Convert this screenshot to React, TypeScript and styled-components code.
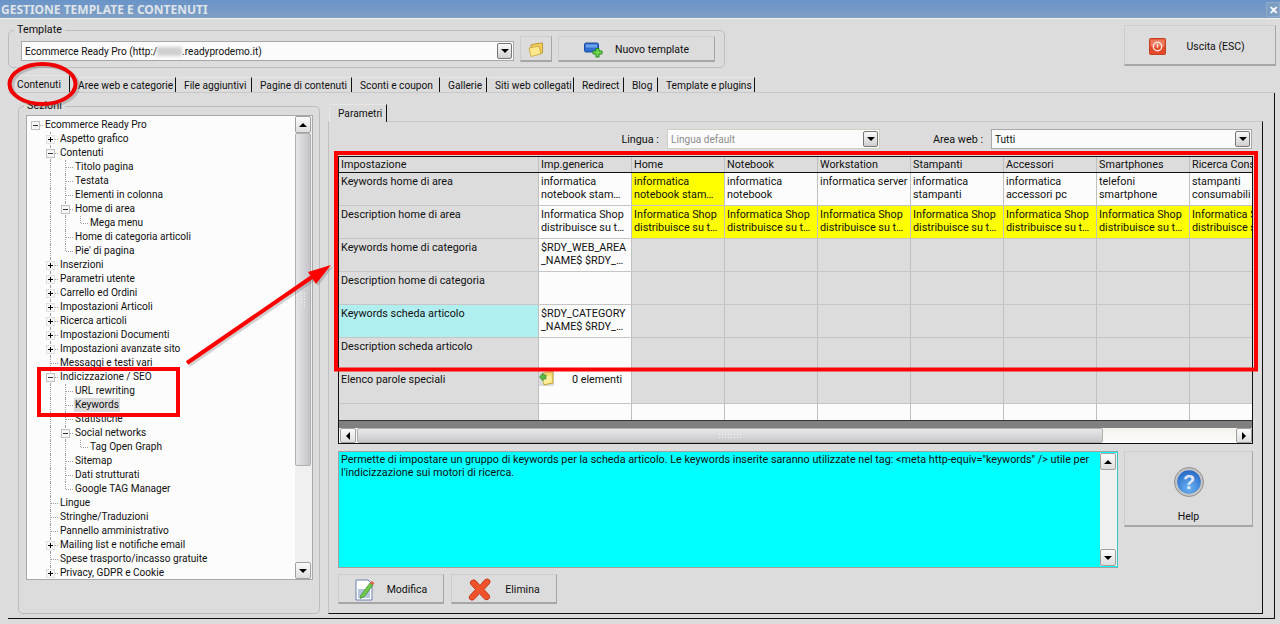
import React, { ReactElement } from 'react';
import styled, { createGlobalStyle, css } from 'styled-components';

const GlobalStyle = createGlobalStyle`
  html, body {
    margin: 0;
    padding: 0;
    background: #dcdcdc;
  }
  * {
    box-sizing: border-box;
  }
`;

const FONT = `Roboto, 'Noto Sans', sans-serif`;

const Window = styled.div`
  position: relative;
  width: 1280px;
  height: 624px;
  overflow: hidden;
  background: #dcdcdc;
  font-family: ${FONT};
  font-size: 10.8px;
  color: #101010;
`;

const TitleBar = styled.div`
  height: 19px;
  padding-left: 1px;
  display: flex;
  align-items: center;
  justify-content: space-between;
  background: linear-gradient(#6a94c8, #7f9fc4);
  border-bottom: 1px solid #f0f0f0;
  color: #dfe4ea;
  font-family: 'Noto Sans', sans-serif;
  font-size: 12px;
  font-weight: 700;
`;

const CloseGlyph = styled.span`
  width: 14px;
  height: 15px;
  display: flex;
  align-items: center;
  justify-content: center;
  color: #ffffff;
  font-size: 11px;
  font-weight: 700;
  background: #7e9dc2;
  border: 1px solid #8fabcb;
`;

const TopRow = styled.div`
  height: 56px;
  padding: 6px 4px 0 8px;
  display: flex;
  justify-content: space-between;
  align-items: flex-start;
`;

const Group = styled.fieldset<{ $w: number; $h: number }>`
  margin: 0;
  width: ${(p) => p.$w}px;
  height: ${(p) => p.$h}px;
  border: 1px solid #bdbdbd;
  border-radius: 5px;
  min-width: 0;
`;

const GroupLegend = styled.legend<{ $x: number }>`
  margin-left: ${(p) => p.$x}px;
  padding: 0 3px;
  height: 12px;
  line-height: 12px;
`;

const TemplateGroup = styled(Group)`
  margin-top: -1px;
  padding: 0 0 0 12px;
  display: flex;
  gap: 6px;
`;

const Combo = styled.div<{ $w: number; $disabled?: boolean }>`
  width: ${(p) => p.$w}px;
  height: 20px;
  display: flex;
  align-items: center;
  justify-content: space-between;
  padding: 0 1px 0 3px;
  background: #fbfbfb;
  border: 1px solid ${(p) => (p.$disabled ? '#cfcfc4' : '#a8a8a8')};
  color: ${(p) => (p.$disabled ? '#8c8c8c' : '#101010')};
  font-size: 10.1px;
  white-space: nowrap;
`;

const TemplateCombo = styled(Combo)`
  margin-top: 5px;
`;

const ComboButton = styled.span`
  width: 15px;
  height: 16px;
  display: flex;
  align-items: center;
  justify-content: center;
  border: 1px solid #777;
  border-radius: 2px;
  background: linear-gradient(#fafafa, #cfcfcf);
`;

const Arrow = styled.i<{ $dir: 'up' | 'down' | 'left' | 'right' }>`
  width: 0;
  height: 0;
  display: block;
  ${(p) =>
    p.$dir === 'up' &&
    css`
      border-left: 4px solid transparent;
      border-right: 4px solid transparent;
      border-bottom: 4px solid #000;
    `}
  ${(p) =>
    p.$dir === 'down' &&
    css`
      border-left: 4px solid transparent;
      border-right: 4px solid transparent;
      border-top: 4px solid #000;
    `}
  ${(p) =>
    p.$dir === 'left' &&
    css`
      border-top: 4px solid transparent;
      border-bottom: 4px solid transparent;
      border-right: 4px solid #000;
    `}
  ${(p) =>
    p.$dir === 'right' &&
    css`
      border-top: 4px solid transparent;
      border-bottom: 4px solid transparent;
      border-left: 4px solid #000;
    `}
`;

const Redacted = styled.span`
  display: inline-block;
  width: 25px;
  height: 9px;
  vertical-align: -1px;
  background: #d0d0d0;
  filter: blur(1.5px);
`;

const Button = styled.div<{ $w: number; $h: number; $gap?: number }>`
  width: ${(p) => p.$w}px;
  height: ${(p) => p.$h}px;
  flex: none;
  padding-top: 2px;
  display: flex;
  align-items: center;
  justify-content: center;
  gap: ${(p) => p.$gap ?? 0}px;
  background: #dcdcdc;
  border: 1px solid #cdcdcd;
  border-right-color: #a6a6a6;
  border-bottom: 2px solid #a6a6a6;
  color: #101010;
  font-size: 10.5px;
`;

const ExitButton = styled(Button)`
  padding-right: 6px;
`;

const HelpButton = styled(Button)`
  padding-top: 15px;
  flex-direction: column;
  justify-content: flex-start;
`;

const Tabs = styled.div`
  height: 18px;
  display: flex;
  align-items: flex-end;
  margin-left: 8px;
  width: 1267px;
  border-bottom: 1px solid #c8c8c8;
  font-size: 10.2px;
`;

const Tab = styled.div<{ $w: number; $active?: boolean }>`
  width: ${(p) => p.$w}px;
  height: ${(p) => (p.$active ? 17 : 15)}px;
  margin-bottom: ${(p) => (p.$active ? -1 : 0)}px;
  padding-left: ${(p) => (p.$active ? 9 : 8)}px;
  display: flex;
  align-items: center;
  white-space: nowrap;
  background: #dcdcdc;
  border-top: 1px solid #e6e6e6;
  border-right: 1px solid #111;
  border-top-left-radius: 2px;
  position: relative;
  top: ${(p) => (p.$active ? -1 : 0)}px;
`;

const OuterPage = styled.div`
  width: 1267px;
  height: 526px;
  margin-left: 8px;
  padding: 7px 0 0 10px;
  display: flex;
  align-items: flex-start;
  gap: 8px;
  border-right: 1px solid #111;
  border-bottom: 1px solid #111;
`;

const SectionsGroup = styled(Group)`
  padding: 3px 0 0 7px;
`;

const TreeBox = styled.div`
  width: 287px;
  height: 465px;
  display: flex;
  background: #fcfcfc;
  border: 1px solid #a8a8a8;
`;

const TreeList = styled.div`
  flex: 1;
  padding: 2px 0 0 1px;
  overflow: hidden;
  font-size: 10.1px;
`;

const TreeRow = styled.div`
  height: 14px;
  display: flex;
  align-items: stretch;
`;

const TreeLabel = styled.span<{ $selected?: boolean }>`
  margin-left: 1px;
  padding: 0 1px;
  line-height: 14px;
  white-space: nowrap;
  background: ${(p) => (p.$selected ? '#dcdcdc' : 'transparent')};
`;

type CellKind = 'none' | 'pipe' | 'tee' | 'elbow' | 'stub';

const TreeCell = styled.span<{ $kind: CellKind }>`
  position: relative;
  width: 15px;
  flex: none;
  display: flex;
  align-items: center;
  justify-content: center;

  ${(p) =>
    (p.$kind === 'pipe' || p.$kind === 'tee' || p.$kind === 'elbow') &&
    css`
      &::before {
        content: '';
        position: absolute;
        left: 7px;
        top: 0;
        height: ${p.$kind === 'elbow' ? 7 : 14}px;
        border-left: 1px dotted #a0a0a0;
      }
    `}
  ${(p) =>
    p.$kind !== 'none' &&
    p.$kind !== 'pipe' &&
    css`
      &::after {
        content: '';
        position: absolute;
        left: 8px;
        right: 0;
        top: 7px;
        border-top: 1px dotted #a0a0a0;
      }
    `}
`;

const Expander = styled.span<{ $open: boolean }>`
  position: relative;
  z-index: 1;
  width: 9px;
  height: 9px;
  background: #f6f6f6;
  border: 1px solid ${(p) => (p.$open ? '#c0c0c0' : '#e0e0e0')};

  &::before {
    content: '';
    position: absolute;
    left: 1px;
    right: 1px;
    top: 3px;
    height: 1px;
    background: ${(p) => (p.$open ? '#333' : '#000')};
  }

  ${(p) =>
    !p.$open &&
    css`
      &::after {
        content: '';
        position: absolute;
        top: 1px;
        bottom: 1px;
        left: 3px;
        width: 1px;
        background: #000;
      }
    `}
`;

const VScroll = styled.div`
  width: 17px;
  flex: none;
  display: flex;
  flex-direction: column;
  background: #f0f0f0;
  padding: 0 1px 0 0;
`;

const ScrollButton = styled.div`
  width: 16px;
  height: 17px;
  flex: none;
  display: flex;
  align-items: center;
  justify-content: center;
  border: 1px solid #a0a0a0;
  border-radius: 2px;
  background: linear-gradient(#fbfbfb, #dedede);
`;

const VThumb = styled.div<{ $h: number }>`
  width: 16px;
  height: ${(p) => p.$h}px;
  display: flex;
  align-items: center;
  justify-content: center;
  border: 1px solid #b0b0b0;
  border-radius: 2px;
  background: linear-gradient(90deg, #e6e6e8, #c4c4c8);
`;

const GripV = styled.span`
  width: 6px;
  height: 16px;
  background-image: radial-gradient(#f4f4f4 1px, transparent 1px);
  background-size: 3px 3px;
`;

const RightColumn = styled.div`
  width: 935px;
  margin-top: 3px;
`;

const InnerTabs = styled.div`
  height: 18px;
  display: flex;
  align-items: flex-end;
  padding-left: 1px;
  font-size: 10.2px;
`;

const InnerTab = styled.div`
  width: 58px;
  height: 18px;
  padding-left: 8px;
  display: flex;
  align-items: center;
  background: #dcdcdc;
  border-top: 1px solid #e6e6e6;
  border-left: 1px solid #e6e6e6;
  border-right: 1px solid #111;
  border-top-left-radius: 2px;
  position: relative;
  top: 1px;
`;

const InnerPage = styled.div`
  height: 493px;
  padding: 7px 0 0 9px;
  border-top: 1px solid #c8c8c8;
  border-left: 1px solid #c0c0c0;
  border-right: 1px solid #111;
  border-bottom: 1px solid #111;
`;

const FilterRow = styled.div`
  display: grid;
  grid-template-columns: 329px 213px 111px 261px;
  align-items: center;
`;

const FilterLabel = styled.span`
  padding-right: 8px;
  text-align: right;
`;

const GridFrame = styled.div`
  width: 915px;
  height: 288px;
  margin-top: 7px;
  border: 1px solid #111;
  display: flex;
  flex-direction: column;
  overflow: hidden;
`;

const SheetRows = styled.div`
  height: 263px;
  overflow: hidden;
  flex: none;
`;

const HeaderRow = styled.div`
  height: 16px;
  display: grid;
  grid-template-columns: 200px repeat(8, 93px);
  border-bottom: 1px solid #111;
`;

const HeaderCell = styled.div`
  padding-left: 2px;
  line-height: 15px;
  white-space: nowrap;
  overflow: hidden;
  border-right: 1px solid #c0c0c0;
`;

const DataRow = styled.div<{ $h: number }>`
  height: ${(p) => p.$h}px;
  display: grid;
  grid-template-columns: 200px repeat(8, 93px);
  border-bottom: 1px solid #c6c6c6;
`;

const Cell = styled.div<{ $bg: string }>`
  padding: 2px 0 0 2px;
  line-height: 13px;
  white-space: pre;
  overflow: hidden;
  background: ${(p) => p.$bg};
  border-right: 1px solid #c0c0c0;
`;

const ListCell = styled(Cell)`
  padding: 0;
  display: flex;
  align-items: flex-start;
  gap: 18px;
`;

const ListIcon = styled.span`
  width: 15px;
  height: 15px;
  display: block;
  background: #dcdcdc;
`;

const ListCount = styled.span`
  padding-top: 2px;
`;

const GreyStrip = styled.div`
  height: 8px;
  flex: none;
  background: #808080;
  border-top: 1px solid #333;
`;

const HScroll = styled.div`
  height: 16px;
  flex: none;
  display: flex;
  padding-left: 1px;
  background: linear-gradient(#f4f2ec, #fdfdfb);
`;

const HButton = styled(ScrollButton)`
  height: 15px;
`;

const HThumb = styled.div`
  width: 746px;
  height: 15px;
  margin-left: 1px;
  display: flex;
  align-items: center;
  justify-content: center;
  border: 1px solid #b0b0b0;
  border-radius: 2px;
  background: linear-gradient(#e8e8ea, #c8c8cc);
`;

const GripH = styled.span`
  width: 24px;
  height: 6px;
  background-image: radial-gradient(#f4f4f4 1px, transparent 1px);
  background-size: 3px 3px;
`;

const HSpacer = styled.div`
  flex: 1;
`;

const InfoRow = styled.div`
  margin-top: 7px;
  display: flex;
  align-items: flex-start;
  gap: 6px;
`;

const InfoBox = styled.div`
  width: 780px;
  height: 117px;
  display: flex;
  background: #00ffff;
  border: 1px solid #a0a0a0;
  border-right-color: #39c6c6;
  border-bottom-color: #a0a0a0;
`;

const InfoText = styled.div`
  flex: 1;
  padding: 2px 2px;
  line-height: 12.5px;
  white-space: pre;
  overflow: hidden;
`;

const InfoScroll = styled(VScroll)`
  margin: 1px 0;
  padding: 0;
  justify-content: space-between;
`;

const ActionRow = styled.div`
  margin-top: 6px;
  display: flex;
  gap: 7px;
`;

const Overlay = styled.svg`
  position: absolute;
  left: 0;
  top: 0;
  pointer-events: none;
`;

type TreeItem = {
  text: string;
  level: number;
  exp?: '+' | '-';
  last?: boolean;
  selected?: boolean;
};

const TREE: TreeItem[] = [
  { text: 'Ecommerce Ready Pro', level: 0, exp: '-' },
  { text: 'Aspetto grafico', level: 1, exp: '+' },
  { text: 'Contenuti', level: 1, exp: '-' },
  { text: 'Titolo pagina', level: 2 },
  { text: 'Testata', level: 2 },
  { text: 'Elementi in colonna', level: 2 },
  { text: 'Home di area', level: 2, exp: '-' },
  { text: 'Mega menu', level: 3, last: true },
  { text: 'Home di categoria articoli', level: 2 },
  { text: "Pie' di pagina", level: 2, last: true },
  { text: 'Inserzioni', level: 1, exp: '+' },
  { text: 'Parametri utente', level: 1, exp: '+' },
  { text: 'Carrello ed Ordini', level: 1, exp: '+' },
  { text: 'Impostazioni Articoli', level: 1, exp: '+' },
  { text: 'Ricerca articoli', level: 1, exp: '+' },
  { text: 'Impostazioni Documenti', level: 1, exp: '+' },
  { text: 'Impostazioni avanzate sito', level: 1, exp: '+' },
  { text: 'Messaggi e testi vari', level: 1 },
  { text: 'Indicizzazione / SEO', level: 1, exp: '-' },
  { text: 'URL rewriting', level: 2 },
  { text: 'Keywords', level: 2, selected: true },
  { text: 'Statistiche', level: 2 },
  { text: 'Social networks', level: 2, exp: '-' },
  { text: 'Tag Open Graph', level: 3, last: true },
  { text: 'Sitemap', level: 2 },
  { text: 'Dati strutturati', level: 2 },
  { text: 'Google TAG Manager', level: 2, last: true },
  { text: 'Lingue', level: 1 },
  { text: 'Stringhe/Traduzioni', level: 1 },
  { text: 'Pannello amministrativo', level: 1 },
  { text: 'Mailing list e notifiche email', level: 1, exp: '+' },
  { text: 'Spese trasporto/incasso gratuite', level: 1 },
  { text: 'Privacy, GDPR e Cookie', level: 1, exp: '+' },
];

const TABS: [string, number][] = [
  ['Contenuti', 62],
  ['Aree web e categorie', 106],
  ['File aggiuntivi', 76],
  ['Pagine di contenuti', 100],
  ['Sconti e coupon', 88],
  ['Gallerie', 47],
  ['Siti web collegati', 87],
  ['Redirect', 50],
  ['Blog', 34],
  ['Template e plugins', 97],
];

const COLUMNS = [
  'Impostazione',
  'Imp.generica',
  'Home',
  'Notebook',
  'Workstation',
  'Stampanti',
  'Accessori',
  'Smartphones',
  'Ricerca Consumabili',
];

const WHITE = '#fcfcfc';
const GREY = '#dcdcdc';
const YELLOW = '#ffff00';
const CYAN = '#b0eef0';

const DESC = 'Informatica Shop\ndistribuisce su t…';

const rows: { label: string; labelBg?: string; cells: [string, string][] }[] = [
  {
    label: 'Keywords home di area',
    cells: [
      ['informatica\nnotebook stam…', WHITE],
      ['informatica\nnotebook stam…', YELLOW],
      ['informatica\nnotebook', WHITE],
      ['informatica server', WHITE],
      ['informatica\nstampanti', WHITE],
      ['informatica\naccessori pc', WHITE],
      ['telefoni\nsmartphone', WHITE],
      ['stampanti\nconsumabili', WHITE],
    ],
  },
  {
    label: 'Description home di area',
    cells: [
      [DESC, WHITE],
      [DESC, YELLOW],
      [DESC, YELLOW],
      [DESC, YELLOW],
      [DESC, YELLOW],
      [DESC, YELLOW],
      [DESC, YELLOW],
      [DESC, YELLOW],
    ],
  },
  {
    label: 'Keywords home di categoria',
    cells: [['$RDY_WEB_AREA\n_NAME$ $RDY_…', WHITE]],
  },
  { label: 'Description home di categoria', cells: [['', WHITE]] },
  {
    label: 'Keywords scheda articolo',
    labelBg: CYAN,
    cells: [['$RDY_CATEGORY\n_NAME$ $RDY_…', WHITE]],
  },
  { label: 'Description scheda articolo', cells: [['', WHITE]] },
];

function cellKinds(item: TreeItem): CellKind[] {
  const own: CellKind = item.level === 0 ? 'stub' : item.last ? 'elbow' : 'tee';
  if (item.level === 0) return [own];
  if (item.level === 1) return ['none', own];
  if (item.level === 2) return ['none', 'pipe', own];
  return ['none', 'pipe', 'pipe', own];
}

function FolderIcon(): ReactElement {
  return (
    <svg width="16" height="16" viewBox="0 0 16 16">
      <path d="M3 3 L9 1.5 L14.5 1 L14.5 11 L4 13 Z" fill="#f0d060" stroke="#c09a30" />
      <path d="M1 6 L11 4 L13 12 L3 14.5 Z" fill="#fbe88c" stroke="#c8a238" strokeWidth="0.8" />
    </svg>
  );
}

function NewTemplateIcon(): ReactElement {
  return (
    <svg width="19" height="16" viewBox="0 0 19 16">
      <rect x="0.5" y="1" width="14" height="9" rx="1.5" fill="#2f6fd0" stroke="#1c4a9c" />
      <rect x="2" y="2.5" width="11" height="3" fill="#6fa4ec" />
      <path d="M9 7 H12 V4.5 H15 V7 H18 V10 H15 V13 H12 V10 H9 Z" transform="translate(0 2)" fill="#6fd84a" stroke="#268a1e" />
    </svg>
  );
}

function PowerIcon(): ReactElement {
  return (
    <svg width="17" height="17" viewBox="0 0 17 17">
      <rect x="0.5" y="0.5" width="16" height="16" rx="1" fill="#e2492a" stroke="#c4401f" />
      <rect x="1.5" y="1.5" width="14" height="7" fill="#ee7a5e" />
      <circle cx="8.5" cy="8.5" r="4.2" fill="none" stroke="#fbe6de" strokeWidth="1.4" />
      <rect x="7.8" y="5.8" width="1.4" height="4" fill="#fbe6de" />
    </svg>
  );
}

function HelpIcon(): ReactElement {
  return (
    <svg width="30" height="30" viewBox="0 0 30 30">
      <defs>
        <radialGradient id="helpBlue" cx="50%" cy="75%" r="70%">
          <stop offset="0" stopColor="#6cb4f4" />
          <stop offset="1" stopColor="#2a6cc8" />
        </radialGradient>
      </defs>
      <circle cx="15" cy="15" r="14.5" fill="#c4c4c4" stroke="#909090" />
      <circle cx="15" cy="15" r="11.8" fill="url(#helpBlue)" />
      <text x="15" y="22" textAnchor="middle" fontFamily="'Liberation Sans', sans-serif" fontWeight="700" fontSize="20" fill="#dfe8f4">
        ?
      </text>
    </svg>
  );
}

function EditIcon(): ReactElement {
  return (
    <svg width="20" height="22" viewBox="0 0 20 22">
      <path d="M1 1 H13 L17 5 V21 H1 Z" fill="#ffffff" stroke="#6a7fae" />
      <rect x="3" y="10" width="12" height="9" fill="#b6c4e0" />
      <path d="M6 16 L15 4 L18 6 L9 18 L5 19.5 Z" fill="#70c84c" stroke="#3c8a2a" strokeWidth="0.7" />
      <path d="M15 4 L16.5 2 L19.5 4 L18 6 Z" fill="#e85c48" />
    </svg>
  );
}

function DeleteIcon(): ReactElement {
  return (
    <svg width="23" height="23" viewBox="0 0 23 23">
      <path
        d="M3 3 Q6 0.5 8 3 L12 7.5 L17 1.5 Q20 0 22 2.5 Q22.5 4 21 6 L16 11.5 L21.5 17.5 Q22.5 20 20 21.5 Q18 22.5 16 20.5 L11.5 15.5 L6 21.5 Q3.5 23 1.5 21 Q0.5 19 2 17.5 L7.5 11.5 L3 6.5 Q1.5 4.5 3 3 Z"
        fill="#f0522c"
        stroke="#c43a1c"
      />
    </svg>
  );
}

function ListFolderIcon(): ReactElement {
  return (
    <ListIcon>
      <svg width="15" height="15" viewBox="0 0 15 15">
        <path d="M3 3 L8 1 L14 1 L14 12 L5 14 Z" fill="#f4d868" stroke="#b89a30" strokeWidth="0.8" />
        <path d="M4 6 L12 4 L13 11 L5 13 Z" fill="#fcee9c" />
        <path d="M0.5 6 L4 2 L4 4 L7 4 L7 8 L4 8 L4 10 Z" fill="#58b848" stroke="#2c8428" strokeWidth="0.6" />
      </svg>
    </ListIcon>
  );
}

function Annotations(): ReactElement {
  return (
    <Overlay width="1280" height="624" viewBox="0 0 1280 624">
      <g transform="translate(2 2)" opacity="0.25">
        <path d="M187 363 L312 277" stroke="#555" strokeWidth="4" fill="none" />
        <path d="M331 265 L308 272 L316 284 Z" fill="#555" />
        <ellipse cx="43" cy="84" rx="33" ry="20" fill="none" stroke="#555" strokeWidth="4" />
      </g>
      <ellipse cx="42.5" cy="84" rx="33" ry="20" fill="none" stroke="#f00000" strokeWidth="4" />
      <rect x="336" y="153" width="920" height="216.5" fill="none" stroke="#ff0000" strokeWidth="4" />
      <rect x="39" y="369" width="139" height="46" fill="none" stroke="#ff0000" strokeWidth="4" />
      <path d="M187 363 L312 277" stroke="#ff0000" strokeWidth="4" fill="none" />
      <path d="M331 265 L308 272 L316 284 Z" fill="#ff0000" />
    </Overlay>
  );
}

function App(): ReactElement {
  return (
    <Window>
      <GlobalStyle />
      <TitleBar>
        GESTIONE TEMPLATE E CONTENUTI
        <CloseGlyph>✕</CloseGlyph>
      </TitleBar>

      <TopRow>
        <TemplateGroup $w={717} $h={44}>
          <GroupLegend $x={-7}>Template</GroupLegend>
          <TemplateCombo $w={493}>
            <span>
              Ecommerce Ready Pro (http:/<Redacted />.readyprodemo.it)
            </span>
            <ComboButton>
              <Arrow $dir="down" />
            </ComboButton>
          </TemplateCombo>
          <Button $w={32} $h={26}>
            <FolderIcon />
          </Button>
          <Button $w={157} $h={26} $gap={12}>
            <NewTemplateIcon />
            Nuovo template
          </Button>
        </TemplateGroup>
        <ExitButton $w={152} $h={41} $gap={20}>
          <PowerIcon />
          Uscita (ESC)
        </ExitButton>
      </TopRow>

      <Tabs>
        {TABS.map(([label, w], i) => (
          <Tab key={label} $w={w} $active={i === 0}>
            {label}
          </Tab>
        ))}
      </Tabs>

      <OuterPage>
        <SectionsGroup $w={302} $h={514}>
          <GroupLegend $x={-2}>Sezioni</GroupLegend>
          <TreeBox>
            <TreeList>
              {TREE.map((item) => (
                <TreeRow key={item.text}>
                  {cellKinds(item).map((kind, i, all) => (
                    <TreeCell key={i} $kind={kind}>
                      {i === all.length - 1 && item.exp && <Expander $open={item.exp === '-'} />}
                    </TreeCell>
                  ))}
                  <TreeLabel $selected={item.selected}>{item.text}</TreeLabel>
                </TreeRow>
              ))}
            </TreeList>
            <VScroll>
              <ScrollButton>
                <Arrow $dir="up" />
              </ScrollButton>
              <VThumb $h={333}>
                <GripV />
              </VThumb>
              <HSpacer />
              <ScrollButton>
                <Arrow $dir="down" />
              </ScrollButton>
            </VScroll>
          </TreeBox>
        </SectionsGroup>

        <RightColumn>
          <InnerTabs>
            <InnerTab>Parametri</InnerTab>
          </InnerTabs>
          <InnerPage>
            <FilterRow>
              <FilterLabel>Lingua :</FilterLabel>
              <Combo $w={213} $disabled>
                Lingua default
                <ComboButton>
                  <Arrow $dir="down" />
                </ComboButton>
              </Combo>
              <FilterLabel>Area web :</FilterLabel>
              <Combo $w={261}>
                Tutti
                <ComboButton>
                  <Arrow $dir="down" />
                </ComboButton>
              </Combo>
            </FilterRow>

            <GridFrame>
              <SheetRows>
                <HeaderRow>
                  {COLUMNS.map((c) => (
                    <HeaderCell key={c}>{c}</HeaderCell>
                  ))}
                </HeaderRow>
                {rows.map((row) => (
                  <DataRow key={row.label} $h={33}>
                    <Cell $bg={row.labelBg ?? GREY}>{row.label}</Cell>
                    {Array.from({ length: 8 }).map((_, i) => {
                      const cell = row.cells[i];
                      return (
                        <Cell key={i} $bg={cell ? cell[1] : GREY}>
                          {cell ? cell[0] : ''}
                        </Cell>
                      );
                    })}
                  </DataRow>
                ))}
                <DataRow $h={33}>
                  <Cell $bg={GREY}>Elenco parole speciali</Cell>
                  <ListCell $bg={WHITE}>
                    <ListFolderIcon />
                    <ListCount>0 elementi</ListCount>
                  </ListCell>
                  {Array.from({ length: 7 }).map((_, i) => (
                    <Cell key={i} $bg={GREY} />
                  ))}
                </DataRow>
                <DataRow $h={17}>
                  <Cell $bg={GREY} />
                  {Array.from({ length: 8 }).map((_, i) => (
                    <Cell key={i} $bg={WHITE} />
                  ))}
                </DataRow>
              </SheetRows>
              <GreyStrip />
              <HScroll>
                <HButton>
                  <Arrow $dir="left" />
                </HButton>
                <HThumb>
                  <GripH />
                </HThumb>
                <HSpacer />
                <HButton>
                  <Arrow $dir="right" />
                </HButton>
              </HScroll>
            </GridFrame>

            <InfoRow>
              <InfoBox>
                <InfoText>
                  {'Permette di impostare un gruppo di keywords per la scheda articolo. Le keywords inserite saranno utilizzate nel tag: <meta http-equiv="keywords" /> utile per\nl\'indicizzazione sui motori di ricerca.'}
                </InfoText>
                <InfoScroll>
                  <ScrollButton>
                    <Arrow $dir="up" />
                  </ScrollButton>
                  <ScrollButton>
                    <Arrow $dir="down" />
                  </ScrollButton>
                </InfoScroll>
              </InfoBox>
              <HelpButton $w={129} $h={76} $gap={13}>
                <HelpIcon />
                Help
              </HelpButton>
            </InfoRow>

            <ActionRow>
              <Button $w={106} $h={30} $gap={12}>
                <EditIcon />
                Modifica
              </Button>
              <Button $w={106} $h={30} $gap={14}>
                <DeleteIcon />
                Elimina
              </Button>
            </ActionRow>
          </InnerPage>
        </RightColumn>
      </OuterPage>

      <Annotations />
    </Window>
  );
}

export default App;
